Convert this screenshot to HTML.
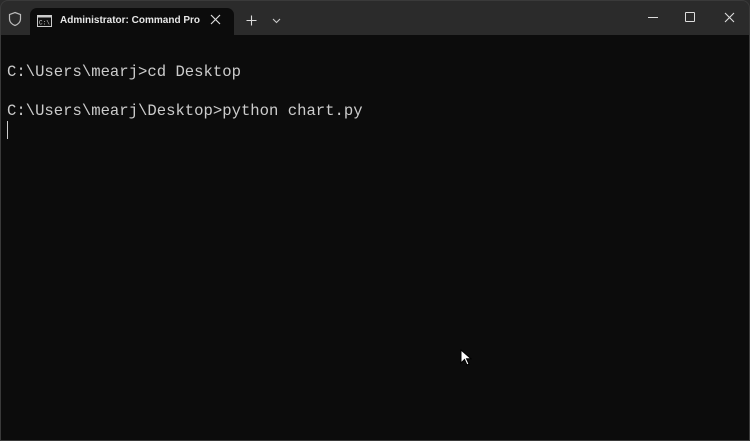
<!DOCTYPE html>
<html><head><style>
html,body{margin:0;padding:0;}
body{width:750px;height:441px;background:#0c0c0c;position:relative;overflow:hidden;font-family:"Liberation Sans",sans-serif;}
.title{position:absolute;left:0;top:0;width:750px;height:35px;background:#2b2b2b;}
.tab{position:absolute;left:30px;top:8px;width:204px;height:27px;background:#0c0c0c;border-radius:7px 7px 0 0;}
.tabtxt{position:absolute;left:60px;top:15px;color:#e8e8e8;font-size:10px;font-weight:bold;white-space:nowrap;}
.term{position:absolute;left:7px;top:43px;color:#cccccc;font-family:"Liberation Mono",monospace;font-size:15.6px;line-height:19.6px;white-space:pre;}
.cursor{position:absolute;left:7px;top:121px;width:1px;height:18px;background:#cccccc;}
.frame{position:absolute;left:0;top:0;width:748px;height:439px;border:1px solid #3a3a3a;border-radius:8px 8px 0 0;pointer-events:none;}
</style></head><body>
<div class="title"></div>
<div class="tab"></div>
<svg style="position:absolute;left:8px;top:11px" width="14" height="16" viewBox="0 0 14 16"><path d="M7 1.5 L12.5 3.5 V8 C12.5 11 10 13.5 7 14.5 C4 13.5 1.5 11 1.5 8 V3.5 Z" fill="none" stroke="#bbb" stroke-width="1.2"/></svg>
<svg style="position:absolute;left:37px;top:15px" width="15" height="12" viewBox="0 0 15 12"><rect x="0.5" y="0.5" width="14" height="11" fill="#111" stroke="#ccc"/><rect x="0.5" y="0.5" width="14" height="2" fill="#ccc"/><text x="2" y="9.5" font-size="6" fill="#ccc" font-family="Liberation Mono">C:\</text></svg>
<div class="tabtxt">Administrator: Command Pro</div>
<svg style="position:absolute;left:210px;top:14px" width="11" height="11" viewBox="0 0 11 11"><path d="M1 1L10 10M10 1L1 10" stroke="#ddd" stroke-width="1.2"/></svg>
<svg style="position:absolute;left:246px;top:15px" width="11" height="11" viewBox="0 0 11 11"><path d="M5.5 0.5V10.5M0.5 5.5H10.5" stroke="#ddd" stroke-width="1.1"/></svg>
<svg style="position:absolute;left:272px;top:18px" width="9" height="6" viewBox="0 0 9 6"><path d="M1 1L4.5 4.5L8 1" fill="none" stroke="#ccc" stroke-width="1.1"/></svg>
<div style="position:absolute;left:648px;top:17px;width:10px;height:1px;background:#ddd"></div>
<div style="position:absolute;left:685px;top:12px;width:8px;height:8px;border:1px solid #ddd;border-radius:1px"></div>
<svg style="position:absolute;left:724px;top:12px" width="11" height="11" viewBox="0 0 11 11"><path d="M1 1L10 10M10 1L1 10" stroke="#ddd" stroke-width="1.1"/></svg>
<div class="term">
C:\Users\mearj&gt;cd Desktop

C:\Users\mearj\Desktop&gt;python chart.py</div>
<div class="cursor"></div>
<svg style="position:absolute;left:460px;top:349px" width="12" height="18" viewBox="0 0 12 18"><path d="M1 1V14L4.5 10.5L7 16L9 15L6.5 9.8H11Z" fill="#fff" stroke="#000" stroke-width="1"/></svg>
<div class="frame"></div>
</body></html>
